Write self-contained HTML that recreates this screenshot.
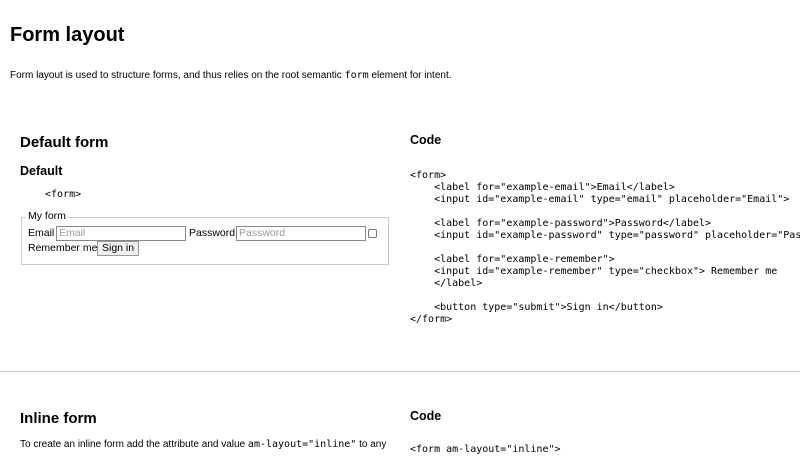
<!DOCTYPE html>
<html><head><style>
body{margin:0;width:800px;height:450px;overflow:hidden;background:#fff;font-family:"Liberation Sans",sans-serif;color:#000;position:relative}
.a{position:absolute;white-space:pre;margin:0}
.m{font-family:"DejaVu Sans Mono","Liberation Mono",monospace;font-size:10px}
h1,h2,h3{margin:0;position:absolute;white-space:nowrap}
.f{position:absolute;font-size:10.5px;line-height:14px;white-space:nowrap}
.in{position:absolute;height:15px;border:1px solid #888;box-sizing:border-box;color:#999;font-size:10.5px;line-height:13px;padding-left:2px}
.clip{position:absolute;overflow:hidden}
</style></head><body>
<h1 style="left:10px;top:24px;font-size:20px">Form layout</h1>
<div class="a" style="left:10px;top:70px;font-size:10px">Form layout is used to structure forms, and thus relies on the root semantic <span class="m">form</span> element for intent.</div>
<h2 style="left:20px;top:134px;font-size:15px">Default form</h2>
<h3 style="left:20px;top:164px;font-size:12.5px">Default</h3>
<div class="a m" style="left:45px;top:189px">&lt;form&gt;</div>
<div class="a" style="left:21px;top:217px;width:366px;height:46px;border:1px solid #ccc"></div>
<div class="a" style="left:26px;top:210px;font-size:10.5px;background:#fff;padding:0 2px">My form</div>
<div class="f" style="left:28px;top:226px">Email</div>
<div class="in" style="left:56px;top:226px;width:130px">Email</div>
<div class="f" style="left:189px;top:226px">Password</div>
<div class="in" style="left:236px;top:226px;width:130px">Password</div>
<div class="a" style="left:368px;top:229px;width:7px;height:7px;border:1px solid #777;border-radius:2px"></div>
<div class="f" style="left:28px;top:241px">Remember me</div>
<div class="a" style="left:97px;top:241px;height:15px;border:1px solid #999;background:#efefef;padding:0 4px;font-size:10.5px;line-height:13px;box-sizing:border-box">Sign in</div>
<h3 style="left:410px;top:133px;font-size:12.5px">Code</h3>
<div class="clip" style="left:410px;top:170px;width:390px;height:170px"><div class="a m" style="left:0;top:0;line-height:12px">&lt;form&gt;
    &lt;label for="example-email"&gt;Email&lt;/label&gt;
    &lt;input id="example-email" type="email" placeholder="Email"&gt;

    &lt;label for="example-password"&gt;Password&lt;/label&gt;
    &lt;input id="example-password" type="password" placeholder="Password"&gt;

    &lt;label for="example-remember"&gt;
    &lt;input id="example-remember" type="checkbox"&gt; Remember me
    &lt;/label&gt;

    &lt;button type="submit"&gt;Sign in&lt;/button&gt;
&lt;/form&gt;</div></div>
<div class="a" style="left:0;top:371px;width:800px;height:1px;background:#ccc"></div>
<h2 style="left:20px;top:410px;font-size:15px">Inline form</h2>
<h3 style="left:410px;top:409px;font-size:12.5px">Code</h3>
<div class="a" style="left:20px;top:439px;font-size:10px">To create an inline form add the attribute and value <span class="m">am-layout="inline"</span> to any</div>
<div class="a m" style="left:410px;top:444px;line-height:12px">&lt;form am-layout="inline"&gt;</div>
</body></html>
